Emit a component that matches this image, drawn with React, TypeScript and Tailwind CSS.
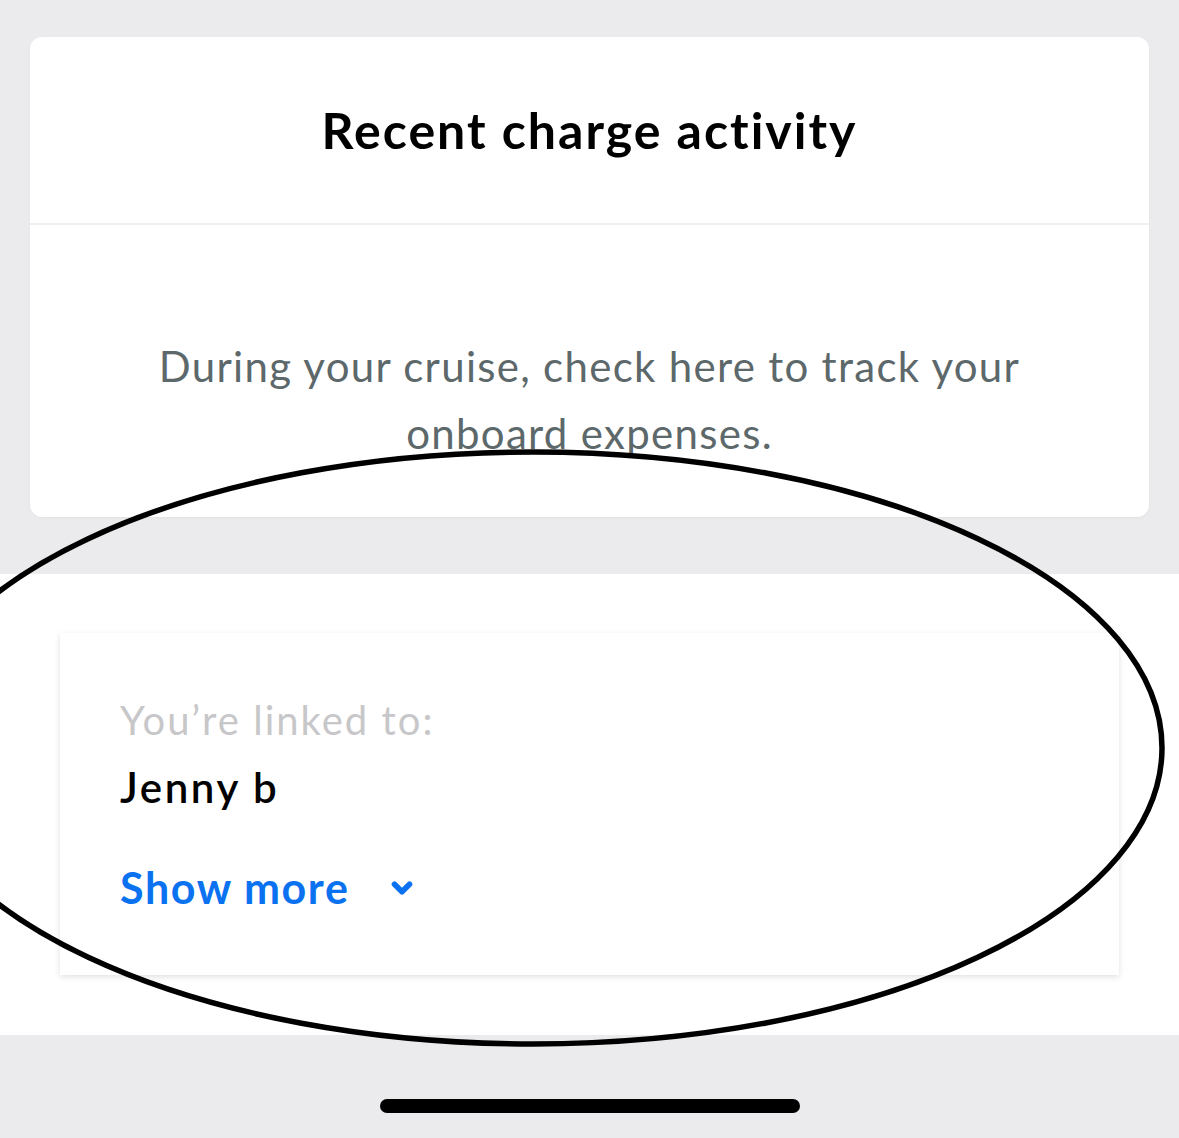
import { ChevronDown } from "lucide-react";

const font = { fontFamily: '"Lato", "Open Sans", sans-serif' };

function ChargeActivityCard() {
    return (
        <div className="mx-[30px] rounded-xl bg-white shadow-[0_1px_3px_rgba(0,0,0,0.04)]">
            {/* Header */}
            <div className="flex h-[188px] items-center justify-center border-b-2 border-[#efeff0]">
                <h2 className="text-[50px] font-bold tracking-[2px] text-black">Recent charge activity</h2>
            </div>

            {/* Empty state */}
            <div className="flex h-[292px] justify-center px-[100px] pt-[108px]">
                <p className="text-center text-[42px] leading-[67px] tracking-[1.3px] text-[#5d686b]">
                    During your cruise, check here to track your onboard expenses.
                </p>
            </div>
        </div>
    );
}

function LinkedCard() {
    return (
        <div className="flex h-[461px] flex-col bg-white px-[60px] pt-[59px]">
            <div className="flex h-[342px] flex-col bg-white px-[60px] pt-[63px] shadow-[0_2px_6px_rgba(0,0,0,0.12)]">
                <span className="text-[40px] leading-[48px] tracking-[2px] text-[#c7c7c9]">You’re linked to:</span>
                <span className="mt-[18px] text-[42px] font-semibold leading-[50px] tracking-[2.6px] text-black">Jenny b</span>
                <button className="mt-[50px] flex items-center gap-[38px] text-[43px] font-bold leading-[52px] tracking-[1.6px] text-[#0a72f0]">
                    Show more
                    <ChevronDown className="h-[30px] w-[30px]" strokeWidth={4.5} />
                </button>
            </div>
        </div>
    );
}

export default function App() {
    return (
        <div className="relative h-[1138px] w-[1179px] overflow-hidden bg-[#ebebed]" style={font}>
            <div className="pt-[37px]">
                <ChargeActivityCard />
            </div>

            <div className="mt-[57px]">
                <LinkedCard />
            </div>

            {/* Home indicator */}
            <div className="flex h-[103px] justify-center pt-[64px]">
                <div className="h-[14px] w-[420px] rounded-full bg-black"></div>
            </div>

            {/* Hand-drawn circle annotation */}
            <svg className="pointer-events-none absolute inset-0" width="1179" height="1138" viewBox="0 0 1179 1138">
                <ellipse cx="533" cy="748" rx="629" ry="296" fill="none" stroke="#000" strokeWidth="5.5" />
            </svg>
        </div>
    );
}
